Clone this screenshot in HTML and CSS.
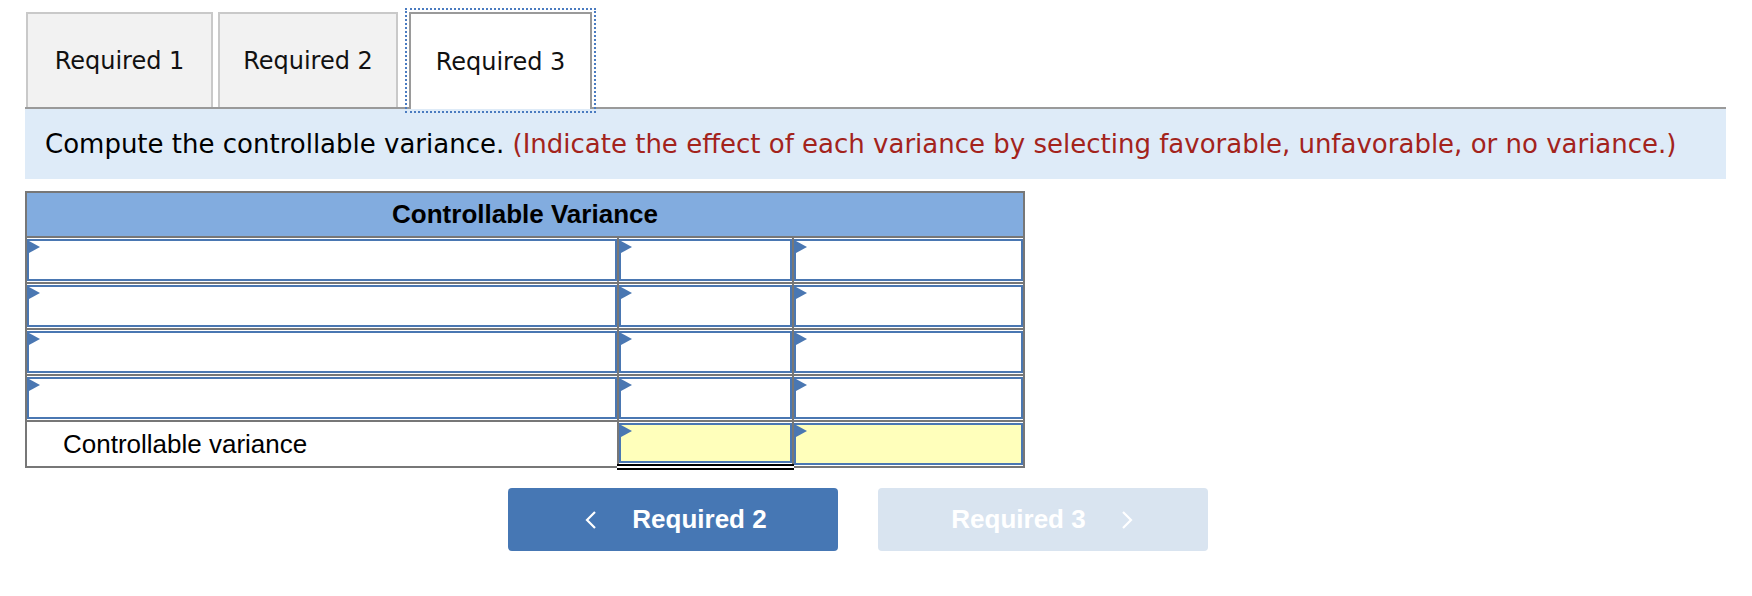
FILE: index.html
```html
<!DOCTYPE html>
<html lang="en">
<head>
<meta charset="utf-8">
<title>Controllable Variance</title>
<link rel="stylesheet" href="styles.css">
</head>
<body>
<div class="page">
  <div class="tabs">
    <div class="tab tab-1">Required 1</div>
    <div class="tab tab-2">Required 2</div>
    <div class="tab tab-3 active">Required 3</div>
  </div>
  <div class="band">
    <p class="prompt">Compute the controllable variance. <span class="hint">(Indicate the effect of each variance by selecting favorable, unfavorable, or no variance.)</span></p>
  </div>
  <table class="grid">
    <colgroup>
      <col class="c1">
      <col class="c2">
      <col class="c3">
    </colgroup>
    <thead>
      <tr><th colspan="3">Controllable Variance</th></tr>
    </thead>
    <tbody>
      <tr>
        <td><div class="field"><span class="flag"></span></div></td>
        <td><div class="field"><span class="flag"></span></div></td>
        <td><div class="field"><span class="flag"></span></div></td>
      </tr>
      <tr>
        <td><div class="field"><span class="flag"></span></div></td>
        <td><div class="field"><span class="flag"></span></div></td>
        <td><div class="field"><span class="flag"></span></div></td>
      </tr>
      <tr>
        <td><div class="field"><span class="flag"></span></div></td>
        <td><div class="field"><span class="flag"></span></div></td>
        <td><div class="field"><span class="flag"></span></div></td>
      </tr>
      <tr>
        <td><div class="field"><span class="flag"></span></div></td>
        <td><div class="field"><span class="flag"></span></div></td>
        <td><div class="field"><span class="flag"></span></div></td>
      </tr>
      <tr class="total">
        <td class="label">Controllable variance</td>
        <td class="sum"><div class="field yellow"><span class="flag"></span></div></td>
        <td><div class="field yellow"><span class="flag"></span></div></td>
      </tr>
    </tbody>
  </table>
  <div class="nav">
    <button class="btn prev" type="button">
      <svg class="chev" width="12" height="20" viewBox="0 0 12 20"><polyline points="10,2 2,10 10,18" fill="none" stroke="#fff" stroke-width="2.2"/></svg>
      <span>Required 2</span>
    </button>
    <button class="btn next" type="button">
      <span>Required 3</span>
      <svg class="chev" width="12" height="20" viewBox="0 0 12 20"><polyline points="2,2 10,10 2,18" fill="none" stroke="#fff" stroke-width="2.2"/></svg>
    </button>
  </div>
</div>
</body>
</html>
```

FILE: styles.css
```css
* { box-sizing: border-box; }
html, body { margin: 0; padding: 0; background: #fff; }
body { font-family: "DejaVu Sans", Verdana, sans-serif; color: #000; }

.page { padding: 12px 26px 0 25px; }

.tabs {
  display: flex;
  align-items: flex-end;
  height: 95px;
  padding-left: 1px;
  position: relative;
  z-index: 2;
}
.tab {
  height: 95px;
  display: flex;
  align-items: center;
  justify-content: center;
  font-size: 24px;
  background: #f2f2f2;
  border: 2px solid #c9c9c9;
  border-bottom: none;
  color: #111;
}
.tab-1 { width: 187px; }
.tab-2 { width: 180px; margin-left: 5px; }
.tab-3 {
  width: 183px;
  margin-left: 11px;
  height: 97px;
  margin-bottom: -2px;
  background: #fff;
  border-color: #9a9a9a;
  outline: 2px dotted #4a7bc0;
  outline-offset: 2px;
}

.band {
  border-top: 2px solid #9a9a9a;
  background: #deebf8;
  height: 72px;
  display: flex;
  align-items: center;
  padding-left: 20px;
  position: relative;
  z-index: 1;
}
.prompt { margin: 0; font-size: 26px; white-space: nowrap; }
.hint { color: #a3231c; }

.grid {
  margin-top: 12px;
  width: 1000px;
  border-collapse: collapse;
  border: 2px solid #777;
  font-family: "Liberation Sans", Arial, sans-serif;
}
.c1 { width: 593px; }
.c2 { width: 175px; }
.c3 { width: 232px; }
.grid th {
  height: 45px;
  background: #82acdf;
  font-size: 26px;
  font-weight: bold;
  text-align: center;
  border: 2px solid #777;
  padding: 0;
}
.grid td {
  height: 46px;
  border: 2px solid #777;
  padding: 0;
}
.field {
  position: relative;
  height: 42px;
  border: 2px solid #4a77b2;
  background: #fff;
}
.field.yellow { background: #ffffbb; }
.flag {
  position: absolute;
  left: 0;
  top: 0;
  width: 0;
  height: 0;
  border-top: 6px solid transparent;
  border-bottom: 6px solid transparent;
  border-left: 11px solid #4a77b2;
}
.total .label {
  font-size: 26px;
  padding-left: 36px;
  background: #fff;
}
.total .sum {
  border-top: 2px solid #000;
  border-bottom: 6px double #000;
}
.total .sum .field { height: 40px; }

.nav {
  display: flex;
  gap: 40px;
  padding-left: 483px;
  margin-top: 18px;
}
.btn {
  width: 330px;
  height: 63px;
  border: none;
  border-radius: 4px;
  display: flex;
  align-items: center;
  justify-content: center;
  gap: 35px;
  font-family: "Liberation Sans", Arial, sans-serif;
  font-size: 26px;
  font-weight: bold;
  color: #fff;
  padding: 0;
}
.btn.prev { background: #4677b4; padding-left: 6px; }
.btn.next { background: #d9e4f0; padding-right: 2px; }
.chev { display: block; }
```
